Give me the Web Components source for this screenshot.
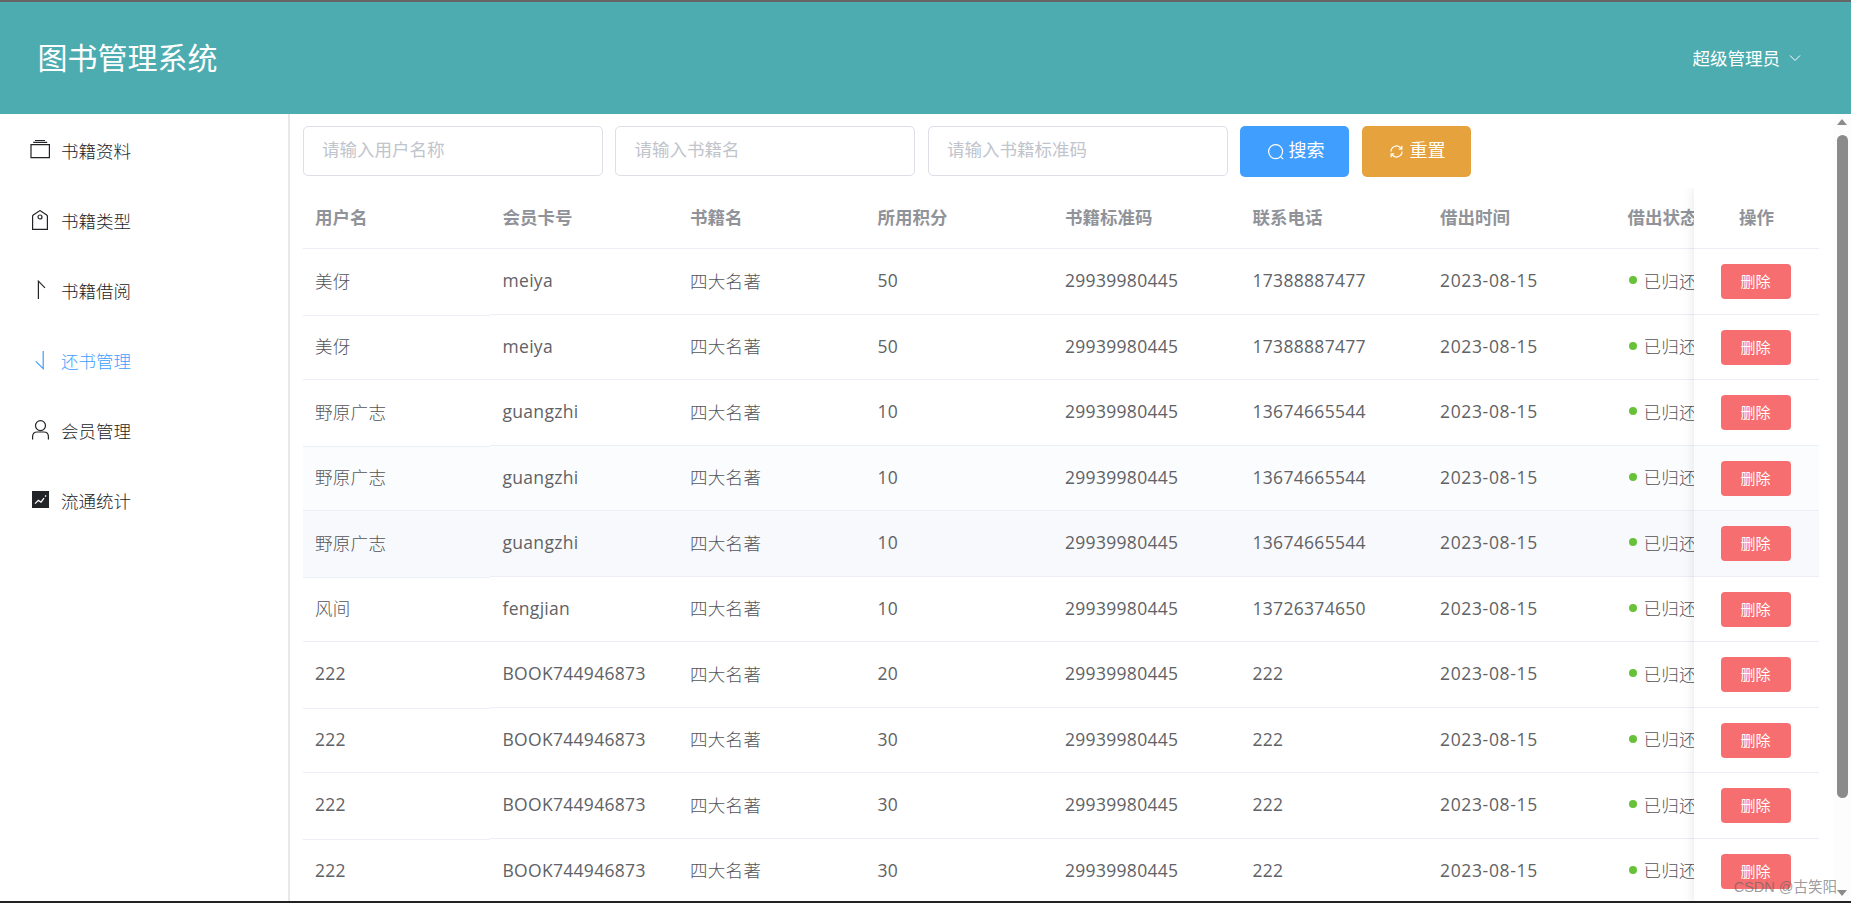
<!DOCTYPE html>
<html lang="zh">
<head>
<meta charset="utf-8">
<title>图书管理系统</title>
<style>
  html, body { margin: 0; height: 100%; overflow: hidden; }
  body {
    font-family: "Open Sans", "Noto Sans CJK SC", sans-serif;
    font-size: 17.5px;
    font-weight: 300;
    background: #fff;
  }
</style>
</head>
<body>
<lib-app></lib-app>

<script>
const ICONS = {
  books: `<svg viewBox="0 0 20 20" width="20" height="20" fill="none" stroke="currentColor" stroke-width="1.2"><path d="M1 4.6h18.4v13H1zM3.2 2.4h14M5 .5h10"/></svg>`,
  tag: `<svg viewBox="0 0 20 20" width="20" height="20" fill="none" stroke="currentColor" stroke-width="1.2"><path d="M2.6 19.4V6.4c0-.6.2-1 .7-1.4L10 .6 16.7 5c.5.4.7.8.7 1.4v13z"/><circle cx="10" cy="7" r="2"/></svg>`,
  up: `<svg viewBox="0 0 20 20" width="20" height="20" fill="none" stroke="currentColor" stroke-width="1.2"><path d="M8.4 19V1.2l6.6 6.6"/></svg>`,
  down: `<svg viewBox="0 0 20 20" width="20" height="20" fill="none" stroke="currentColor" stroke-width="1.2"><path d="M13.2 1v17.6l-7.4-7.2"/></svg>`,
  user: `<svg viewBox="0 0 20 20" width="20" height="20" fill="none" stroke="currentColor" stroke-width="1.2"><circle cx="10.5" cy="5.6" r="5"/><path d="M2.6 19.5v-2.9c0-3 2-4.6 4.6-4.6h6.6c2.6 0 4.6 1.6 4.6 4.6v2.9"/></svg>`,
  chart: `<svg viewBox="0 0 20 20" width="20" height="20"><rect x="2" y="1" width="17" height="17" fill="currentColor"/><path d="M5 13.6l3.4-3.2 2.6 1.8 3-4M15 6.4l1.2-.9" fill="none" stroke="#fff" stroke-width="1.3"/></svg>`,
  search: `<svg viewBox="0 0 18 18" width="18" height="18" fill="none" stroke="currentColor" stroke-width="1.2"><circle cx="8.6" cy="8.6" r="7"/><path d="M13.6 13.6l2.6 2.6"/></svg>`,
  refresh: `<svg viewBox="0 0 18 18" width="15" height="15" style="margin-right:2px" fill="none" stroke="currentColor" stroke-width="1.5"><path d="M2.4 9a6.6 6.6 0 0 1 11-4.9l1.4 1.5M15.6 9a6.6 6.6 0 0 1-11 4.9l-1.4-1.5"/><path d="M15.4 2.2v4h-3.6M2.6 15.8v-4h3.6"/></svg>`
};

class AppHeader extends HTMLElement {
  constructor() {
    super();
    this.attachShadow({mode: "open"}).innerHTML = `
      <style>
        :host {
          display: flex;
          align-items: center;
          justify-content: space-between;
          box-sizing: border-box;
          height: 114px;
          padding: 0 50px 0 37.5px;
          background: #4cacb0;
          border-top: 2px solid #666;
          color: #fff;
        }
        .title { font-size: 30px; padding-bottom: 5px; font-weight: 400; }
        .user { display: flex; align-items: center; gap: 9px; padding-bottom: 1px; font-weight: 400; }
      </style>
      <div class="title">图书管理系统</div>
      <div class="user">
        <span>超级管理员</span>
        <svg viewBox="0 0 12 8" width="12" height="8" fill="none" stroke="currentColor" stroke-width="1"><path d="M1 1.5l5 5 5-5"/></svg>
      </div>`;
  }
}
customElements.define("app-header", AppHeader);

class MenuItem extends HTMLElement {
  constructor() {
    super();
    this.attachShadow({mode: "open"}).innerHTML = `
      <style>
        :host {
          display: flex;
          align-items: center;
          gap: 11px;
          height: 70px;
          padding-left: 30px;
          color: #232427;
        }
        :host([active]) { color: #409eff; }
        .icon { display: flex; width: 20px; height: 20px; }
      </style>
      <span class="icon">${ICONS[this.getAttribute("icon")]}</span>
      <slot></slot>`;
  }
}
customElements.define("menu-item", MenuItem);

class SideMenu extends HTMLElement {
  constructor() {
    super();
    this.attachShadow({mode: "open"}).innerHTML = `
      <style>
        :host {
          display: block;
          box-sizing: border-box;
          width: 290px;
          flex: none;
          padding-top: 1px;
          border-right: 2px solid #e8e8e8;
        }
      </style>
      <slot></slot>`;
  }
}
customElements.define("side-menu", SideMenu);

class TextInput extends HTMLElement {
  constructor() {
    super();
    this.attachShadow({mode: "open"}).innerHTML = `
      <style>
        :host {
          display: flex;
          align-items: center;
          box-sizing: border-box;
          width: 300px;
          height: 50px;
          padding: 0 18.5px 5px;
          border: 1px solid #dcdfe6;
          border-radius: 5px;
          color: #c0c4cc;
          font-weight: 400;
        }
      </style>
      <slot></slot>`;
  }
}
customElements.define("text-input", TextInput);

class ActionButton extends HTMLElement {
  constructor() {
    super();
    this.attachShadow({mode: "open"}).innerHTML = `
      <style>
        :host {
          display: flex;
          align-items: center;
          justify-content: center;
          gap: 4px;
          box-sizing: border-box;
          width: 109px;
          height: 51px;
          padding-left: 2px;
          border-radius: 5px;
          color: #fff;
          font-size: 18px;
          font-weight: 400;
          background: var(--btn-bg, #409eff);
        }
        .icon { display: flex; }
        .label { padding-bottom: 5px; }
      </style>
      <span class="icon">${ICONS[this.getAttribute("icon")]}</span>
      <span class="label"><slot></slot></span>`;
  }
}
customElements.define("action-button", ActionButton);

class SearchBar extends HTMLElement {
  constructor() {
    super();
    this.attachShadow({mode: "open"}).innerHTML = `
      <style>
        :host {
          display: flex;
          align-items: flex-start;
          gap: 12.5px;
          height: 74px;
          padding-top: 12px;
          box-sizing: border-box;
        }
      </style>
      <slot></slot>`;
  }
}
customElements.define("search-bar", SearchBar);

class StatusDot extends HTMLElement {
  constructor() {
    super();
    this.attachShadow({mode: "open"}).innerHTML = `
      <style>
        :host { display: inline-flex; align-items: center; gap: 6.5px; white-space: nowrap; }
        i { width: 8px; height: 8px; margin-left: 1.5px; border-radius: 50%; background: #67c23a; }
      </style>
      <i></i><slot></slot>`;
  }
}
customElements.define("status-dot", StatusDot);

const COLUMNS = ["用户名", "会员卡号", "书籍名", "所用积分", "书籍标准码", "联系电话", "借出时间", "借出状态"];
const ROWS = [
  ["美伢", "meiya", "四大名著", "50", "29939980445", "17388887477", "2023-08-15"],
  ["美伢", "meiya", "四大名著", "50", "29939980445", "17388887477", "2023-08-15"],
  ["野原广志", "guangzhi", "四大名著", "10", "29939980445", "13674665544", "2023-08-15"],
  ["野原广志", "guangzhi", "四大名著", "10", "29939980445", "13674665544", "2023-08-15"],
  ["野原广志", "guangzhi", "四大名著", "10", "29939980445", "13674665544", "2023-08-15"],
  ["风间", "fengjian", "四大名著", "10", "29939980445", "13726374650", "2023-08-15"],
  ["222", "BOOK744946873", "四大名著", "20", "29939980445", "222", "2023-08-15"],
  ["222", "BOOK744946873", "四大名著", "30", "29939980445", "222", "2023-08-15"],
  ["222", "BOOK744946873", "四大名著", "30", "29939980445", "222", "2023-08-15"],
  ["222", "BOOK744946873", "四大名著", "30", "29939980445", "222", "2023-08-15"]
];

const rowTone = i => i === 3 ? " soft" : i === 4 ? " hover" : "";
const cellClass = v => /^\d{4}-/.test(v) ? " latin date" : /^[\x00-\x7f]+$/.test(v) ? " latin" : "";

class DataTable extends HTMLElement {
  constructor() {
    super();
    const head = COLUMNS.map(c => `<div class="cell th">${c}</div>`).join("");
    const body = ROWS.map((r, i) => {
      return `<div class="row${rowTone(i)}${i % 2 === 0 ? " odd" : ""}">` +
        r.map((v, j) => `<div class="cell${j === 0 ? " first" : ""}${cellClass(v)}">${v}</div>`).join("") +
        `<div class="cell"><status-dot>已归还</status-dot></div></div>`;
    }).join("");
    const fixed = ROWS.map((r, i) => `<div class="fix-cell${rowTone(i)}"><span class="del">删除</span></div>`).join("");
    this.attachShadow({mode: "open"}).innerHTML = `
      <style>
        :host {
          display: block;
          position: relative;
          height: 715px;
          overflow: hidden;
          color: #525458;
        }
        .row {
          display: grid;
          grid-template-columns: repeat(8, 187.5px);
          height: 65.5px;
          width: 1516px;
          box-sizing: border-box;
          border-bottom: 1px solid #ebeef5;
          background: #fff;
        }
        .head { height: 61px; }
        .cell {
          display: flex;
          align-items: center;
          box-sizing: border-box;
          padding: 0 0 2px 12.5px;
          white-space: nowrap;
          overflow: hidden;
          letter-spacing: .3px;
          background: inherit;
        }
        .latin { font-weight: 400; color: #606266; }
        .date { letter-spacing: .65px; }
        /* the left fixed column of the original lands a pixel lower on odd rows */
        .odd .first {
          position: relative;
          z-index: 1;
          margin-bottom: -2px;
          padding-bottom: 3px;
          border-bottom: 1px solid #ebeef5;
        }
        .th { color: #909399; font-weight: 700; letter-spacing: 0; padding-bottom: 4px; }
        .soft { background: #fbfcfe; }
        .hover { background: #f8f9fc; }
        .fixed {
          position: absolute;
          z-index: 2;
          top: 0;
          right: 0;
          width: 125px;
          background: #fff;
          box-shadow: -2px 0 10px rgba(0,0,0,.08);
        }
        .fix-head {
          display: flex; align-items: center; justify-content: center;
          height: 61px; box-sizing: border-box;
          padding-bottom: 4px;
          border-bottom: 1px solid #ebeef5;
          color: #909399; font-weight: 700;
        }
        .fix-cell {
          display: flex; align-items: center; justify-content: center;
          height: 65.5px; box-sizing: border-box;
          padding: 1px 2px 0 0;
          border-bottom: 1px solid #ebeef5;
        }
        .del {
          display: flex; align-items: center; justify-content: center;
          width: 70px; height: 35px;
          padding-bottom: 2px;
          box-sizing: border-box;
          border-radius: 4px;
          background: #f66e70; color: #fff;
          font-size: 15px;
          font-weight: 400;
        }
      </style>
      <div class="row head">${head}</div>
      ${body}
      <div class="fixed">
        <div class="fix-head">操作</div>
        ${fixed}
      </div>`;
  }
}
customElements.define("data-table", DataTable);

class FakeScrollbar extends HTMLElement {
  constructor() {
    super();
    this.attachShadow({mode: "open"}).innerHTML = `
      <style>
        :host {
          display: flex;
          flex-direction: column;
          align-items: center;
          box-sizing: border-box;
          width: 18px;
          flex: none;
          background: #fdfdfd;
        }
        .up, .dn { width: 0; height: 0; border-left: 5px solid transparent; border-right: 5px solid transparent; }
        .up { margin-top: 5px; border-bottom: 6px solid #8b8b8b; }
        .dn { margin-top: auto; margin-bottom: 5px; border-top: 6px solid #8b8b8b; }
        .thumb { width: 11px; height: 663px; margin-top: 10px; border-radius: 6px; background: #8b8b8b; }
      </style>
      <div class="up"></div><div class="thumb"></div><div class="dn"></div>`;
  }
}
customElements.define("fake-scrollbar", FakeScrollbar);

class LibApp extends HTMLElement {
  constructor() {
    super();
    this.attachShadow({mode: "open"}).innerHTML = `
      <style>
        :host { display: flex; flex-direction: column; height: 903px; position: relative; box-sizing: border-box; border-bottom: 2px solid #222; overflow: hidden; }
        .body { display: flex; flex: 1; min-height: 0; }
        main { flex: 1; min-width: 0; padding: 0 14px 0 12.5px; overflow: hidden; }
        .mark { position: absolute; z-index: 5; right: 14px; bottom: 5px; font: 400 14.5px "Liberation Sans", "Noto Sans CJK SC", sans-serif; color: rgba(100,100,100,.65); }
      </style>
      <app-header></app-header>
      <div class="body">
        <side-menu>
          <menu-item icon="books">书籍资料</menu-item>
          <menu-item icon="tag">书籍类型</menu-item>
          <menu-item icon="up">书籍借阅</menu-item>
          <menu-item icon="down" active>还书管理</menu-item>
          <menu-item icon="user">会员管理</menu-item>
          <menu-item icon="chart">流通统计</menu-item>
        </side-menu>
        <main>
          <search-bar>
            <text-input>请输入用户名称</text-input>
            <text-input>请输入书籍名</text-input>
            <text-input>请输入书籍标准码</text-input>
            <action-button icon="search">搜索</action-button>
            <action-button icon="refresh" style="--btn-bg:#e6a23c">重置</action-button>
          </search-bar>
          <data-table></data-table>
        </main>
        <fake-scrollbar></fake-scrollbar>
      </div>
      <div class="mark">CSDN @古笑阳</div>`;
  }
}
customElements.define("lib-app", LibApp);
</script>
</body>
</html>
